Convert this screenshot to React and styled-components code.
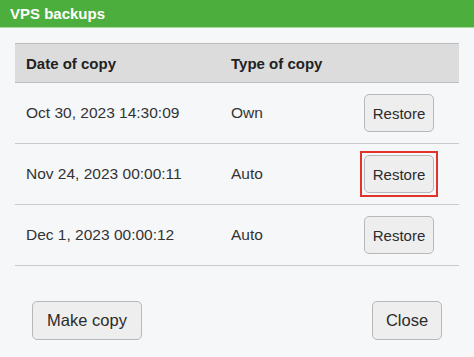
import React from "react";
import styled, { createGlobalStyle } from "styled-components";

const GlobalStyle = createGlobalStyle`
  html, body {
    margin: 0;
    padding: 0;
    background: #ffffff;
  }
  body {
    font-family: "Liberation Sans", Arial, sans-serif;
  }
`;

const Dialog = styled.div`
  width: 474px;
  height: 357px;
  display: flex;
  flex-direction: column;
  background-color: #f6f7f9;
  overflow: hidden;
`;

const TitleBar = styled.div`
  height: 28px;
  display: flex;
  align-items: center;
  padding: 0 10px;
  background-color: #4cae3d;
  border-bottom: 1px solid #a9d99e;
  color: #ffffff;
  font-weight: 700;
  font-size: 15px;
  box-sizing: border-box;
`;

const Body = styled.div`
  flex: 1;
  display: flex;
  flex-direction: column;
  padding: 15px 15px 0 15px;
`;

const Table = styled.div`
  display: flex;
  flex-direction: column;
`;

const Row = styled.div`
  display: grid;
  grid-template-columns: 205px 1fr 120px;
  align-items: center;
  height: ${(props) => (props.head ? "40px" : "61px")};
  box-sizing: border-box;
  border-bottom: 1px solid ${(props) => (props.head ? "#bdbdbd" : "#cacaca")};
  border-top: ${(props) => (props.head ? "1px solid #bdbdbd" : "none")};
  background-color: ${(props) => (props.head ? "#dcdcdc" : "transparent")};
  color: ${(props) => (props.head ? "#222" : "#333")};
  font-size: ${(props) => (props.head ? "15px" : "15.5px")};
  font-weight: ${(props) => (props.head ? 700 : 400)};
`;

const Cell = styled.div`
  padding-left: 11px;
  white-space: nowrap;
`;

const ActionCell = styled.div`
  display: flex;
  justify-content: flex-end;
  padding-right: 21px;
`;

const Highlight = styled.div`
  display: flex;
  padding: 2px;
  border: 2px solid ${(props) => (props.on ? "#e2332b" : "transparent")};
`;

const Button = styled.button`
  font-family: "Liberation Sans", Arial, sans-serif;
  font-size: ${(props) => (props.big ? "16.5px" : "15px")};
  color: #2b2b2b;
  background-color: #eeeeee;
  border: 1px solid #b8b8b8;
  border-radius: 5px;
  height: ${(props) => (props.big ? "39px" : "38px")};
  width: ${(props) => props.w || "70px"};
  padding: 0;
  cursor: pointer;
`;

const Footer = styled.div`
  display: flex;
  justify-content: space-between;
  padding: 35px 17px 0 17px;
`;

const backups = [
  { date: "Oct 30, 2023 14:30:09", type: "Own" },
  { date: "Nov 24, 2023 00:00:11", type: "Auto", marked: true },
  { date: "Dec 1, 2023 00:00:12", type: "Auto" },
];

const App = () => {
  return (
    <>
      <GlobalStyle />
      <Dialog>
        <TitleBar>VPS backups</TitleBar>
        <Body>
          <Table>
            <Row head>
              <Cell>Date of copy</Cell>
              <Cell>Type of copy</Cell>
              <div />
            </Row>
            {backups.map((b) => (
              <Row key={b.date}>
                <Cell>{b.date}</Cell>
                <Cell>{b.type}</Cell>
                <ActionCell>
                  <Highlight on={b.marked}>
                    <Button>Restore</Button>
                  </Highlight>
                </ActionCell>
              </Row>
            ))}
          </Table>
          <Footer>
            <Button big w="110px">Make copy</Button>
            <Button big w="70px">Close</Button>
          </Footer>
        </Body>
      </Dialog>
    </>
  );
};

export default App;
